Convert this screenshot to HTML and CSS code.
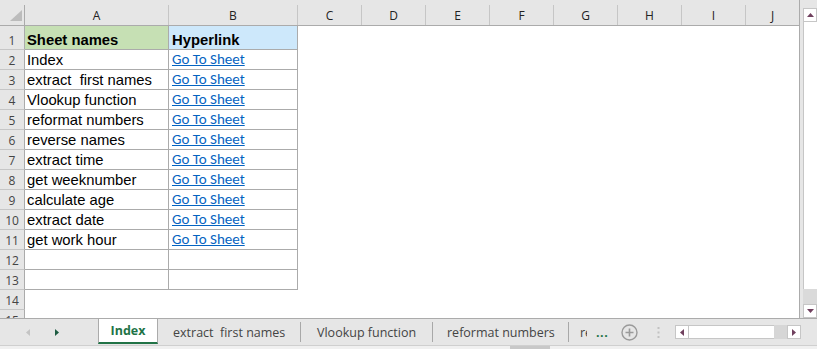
FILE: index.html
```html
<!DOCTYPE html>
<html>
<head>
<meta charset="utf-8">
<link rel="stylesheet" href="styles.css">
</head>
<body>
<div class="app">
  <div class="main">
    <div class="sheet">
      <div class="colhead">
        <div class="corner"><svg width="12" height="11" viewBox="0 0 12 11"><polygon points="12,0 12,11 0,11" fill="#bcbcbc"/></svg></div>
        <div class="w-a">A</div>
        <div class="w-b">B</div>
        <div class="w-c">C</div>
        <div class="w-c">D</div>
        <div class="w-c">E</div>
        <div class="w-c">F</div>
        <div class="w-c">G</div>
        <div class="w-c">H</div>
        <div class="w-c">I</div>
        <div class="w-j">J</div>
      </div>
      <div class="row first"><div class="rn">1</div><div class="cell a hdr green">Sheet names</div><div class="cell b hdr blue">Hyperlink</div></div>
      <div class="row"><div class="rn">2</div><div class="cell a">Index</div><div class="cell b"><span class="link">Go To Sheet</span></div></div>
      <div class="row"><div class="rn">3</div><div class="cell a">extract  first names</div><div class="cell b"><span class="link">Go To Sheet</span></div></div>
      <div class="row"><div class="rn">4</div><div class="cell a">Vlookup function</div><div class="cell b"><span class="link">Go To Sheet</span></div></div>
      <div class="row"><div class="rn">5</div><div class="cell a">reformat numbers</div><div class="cell b"><span class="link">Go To Sheet</span></div></div>
      <div class="row"><div class="rn">6</div><div class="cell a">reverse names</div><div class="cell b"><span class="link">Go To Sheet</span></div></div>
      <div class="row"><div class="rn">7</div><div class="cell a">extract time</div><div class="cell b"><span class="link">Go To Sheet</span></div></div>
      <div class="row"><div class="rn">8</div><div class="cell a">get weeknumber</div><div class="cell b"><span class="link">Go To Sheet</span></div></div>
      <div class="row"><div class="rn">9</div><div class="cell a">calculate age</div><div class="cell b"><span class="link">Go To Sheet</span></div></div>
      <div class="row"><div class="rn">10</div><div class="cell a">extract date</div><div class="cell b"><span class="link">Go To Sheet</span></div></div>
      <div class="row"><div class="rn">11</div><div class="cell a">get work hour</div><div class="cell b"><span class="link">Go To Sheet</span></div></div>
      <div class="row"><div class="rn">12</div><div class="cell a"></div><div class="cell b"></div></div>
      <div class="row"><div class="rn">13</div><div class="cell a"></div><div class="cell b"></div></div>
      <div class="row"><div class="rn">14</div></div>
      <div class="row"><div class="rn">15</div></div>
    </div>
    <div class="vscroll">
      <div class="vbtn"><svg width="7" height="4" viewBox="0 0 7 4"><polygon points="0,4 3.5,0 7,4" fill="#70405e"/></svg></div>
      <div class="vthumb"></div>
      <div class="vtrack"></div>
      <div class="vbtn"><svg width="7" height="4" viewBox="0 0 7 4"><polygon points="0,0 7,0 3.5,4" fill="#70405e"/></svg></div>
    </div>
  </div>
  <div class="tabbar">
    <div class="nav">
      <svg width="4" height="7" viewBox="0 0 4 7"><polygon points="4,0 0,3.5 4,7" fill="#c4c4c4"/></svg>
      <svg width="4" height="7" viewBox="0 0 4 7"><polygon points="0,0 4,3.5 0,7" fill="#1d5c42"/></svg>
    </div>
    <div class="tab active">Index</div>
    <div class="tab t2">extract  first names</div>
    <div class="sep"></div>
    <div class="tab t3">Vlookup function</div>
    <div class="sep"></div>
    <div class="tab t4">reformat numbers</div>
    <div class="sep"></div>
    <div class="tab t5"><span class="clip">reverse names</span></div>
    <div class="more">...</div>
    <svg class="plus" width="17" height="17" viewBox="0 0 17 17"><circle cx="8.5" cy="8.5" r="7.5" fill="none" stroke="#9a9a9a" stroke-width="1.4"/><path d="M8.5 4.5v8M4.5 8.5h8" stroke="#9a9a9a" stroke-width="1.6"/></svg>
    <svg class="vdots" width="3" height="11" viewBox="0 0 3 11"><rect x="0.5" y="0" width="2" height="2" fill="#c2c2c2"/><rect x="0.5" y="4.5" width="2" height="2" fill="#c2c2c2"/><rect x="0.5" y="9" width="2" height="2" fill="#c2c2c2"/></svg>
    <div class="hscroll">
      <div class="hbtn"><svg width="4" height="7" viewBox="0 0 4 7"><polygon points="4,0 0,3.5 4,7" fill="#70405e"/></svg></div>
      <div class="htrack"></div>
      <div class="hgray"></div>
      <div class="hbtn"><svg width="4" height="7" viewBox="0 0 4 7"><polygon points="0,0 4,3.5 0,7" fill="#70405e"/></svg></div>
    </div>
  </div>
  <div class="status"><div class="status-block"></div></div>
</div>
</body>
</html>
```
FILE: styles.css
```css
* { box-sizing: border-box; margin: 0; padding: 0; }
html, body { width: 817px; height: 349px; overflow: hidden; }
body { background: #e6e6e6; font-family: "Liberation Sans", Arial, sans-serif; }

.app { display: flex; flex-direction: column; height: 349px; }
.main { display: flex; height: 318px; flex: none; overflow: hidden; }

.sheet { width: 800px; flex: none; border-right: 1px solid #ababab; background: #fff; overflow: hidden; }

.colhead { display: flex; height: 26px; padding-top: 5px; background: #e6e6e6; border-bottom: 1px solid #ababab; }
.colhead > div { height: 20px; flex: none; border-right: 1px solid #c6c6c6; display: flex; align-items: center; justify-content: center; font-family: "Open Sans", sans-serif; font-size: 12px; color: #222; }
.colhead > .corner { width: 25px; justify-content: flex-end; align-items: flex-end; padding: 0 2px 4px 0; border-right-color: #ababab; }
.corner svg { display: block; }
.w-a { width: 144px; }
.w-b { width: 129px; }
.w-c { width: 64px; }
.colhead > .w-j { width: 53px; border-right: none; }

.row { display: flex; height: 20px; }
.row.first { height: 24px; }
.rn { width: 25px; flex: none; background: #e6e6e6; border-right: 1px solid #ababab; border-bottom: 1px solid #c6c6c6; display: flex; align-items: flex-end; justify-content: center; font-family: "Open Sans", sans-serif; font-size: 12px; line-height: 17px; color: #444; }
.cell { flex: none; border-right: 1px solid #ababab; border-bottom: 1px solid #ababab; padding-left: 2px; display: flex; align-items: flex-end; font-size: 14.8px; line-height: 17px; color: #000; white-space: pre; overflow: hidden; }
.cell.a { width: 144px; }
.cell.b { width: 129px; }
.cell.hdr { font-weight: bold; }
.cell.green { background: #c6e0b4; }
.cell.blue { background: #cde8fb; padding-left: 3px; }
.link { font-family: Carlito, Lato, sans-serif; font-size: 15px; line-height: 19px; color: #0563c1; text-decoration: underline; padding-left: 1px; }

.vscroll { width: 14px; margin-left: 3px; flex: none; padding-top: 8px; display: flex; flex-direction: column; }
.vbtn { height: 14px; flex: none; background: #fff; border: 1px solid #c6c6c6; display: flex; align-items: center; justify-content: center; }
.vbtn svg { display: block; }
.vthumb { height: 267px; flex: none; background: #fff; border-left: 1px solid #c6c6c6; }
.vtrack { flex: 1; background: #dadada; }

.tabbar { height: 28px; flex: none; display: flex; align-items: center; border-top: 1px solid #ababab; border-bottom: 1px solid #cfcfcf; background: #e6e6e6; font-family: "Open Sans", sans-serif; font-size: 12.5px; color: #444; }
.nav { width: 98px; flex: none; align-self: stretch; display: flex; align-items: center; padding-left: 26px; gap: 25px; }
.nav svg { display: block; }
.tab { flex: none; white-space: pre; }
.tab.active { width: 60px; height: 25px; align-self: flex-start; background: #fff; border-left: 1px solid #ababab; border-right: 1px solid #ababab; border-bottom: 2px solid #217346; display: flex; align-items: center; justify-content: center; font-weight: bold; color: #217346; }
.tab.t2 { width: 142px; padding-left: 15px; }
.tab.t3 { width: 131px; padding-left: 16px; }
.tab.t4 { width: 135px; padding-left: 14px; }
.tab.t5 { width: 19px; padding-left: 11px; overflow: hidden; }
.clip { display: block; width: 7px; overflow: hidden; }
.sep { width: 1px; height: 20px; flex: none; background: #a8a8a8; }
.more { margin-left: 8px; font-weight: bold; color: #217346; letter-spacing: 0.5px; line-height: 12px; padding-top: 2px; }
.plus { display: block; flex: none; margin-left: 13px; }
.vdots { display: block; flex: none; margin-left: 19px; }
.hscroll { display: flex; height: 14px; width: 126px; margin-left: 15px; flex: none; }
.hbtn { width: 14px; flex: none; background: #fff; border: 1px solid #c6c6c6; display: flex; align-items: center; justify-content: center; }
.hbtn svg { display: block; }
.htrack { width: 85px; flex: none; background: #fff; border-top: 1px solid #c6c6c6; border-bottom: 1px solid #c6c6c6; }
.hgray { width: 13px; flex: none; background: #d6d6d6; }

.status { height: 3px; flex: none; background: #f0f0f0; display: flex; padding-left: 510px; }
.status-block { width: 40px; background: #c8c8c8; }
```
